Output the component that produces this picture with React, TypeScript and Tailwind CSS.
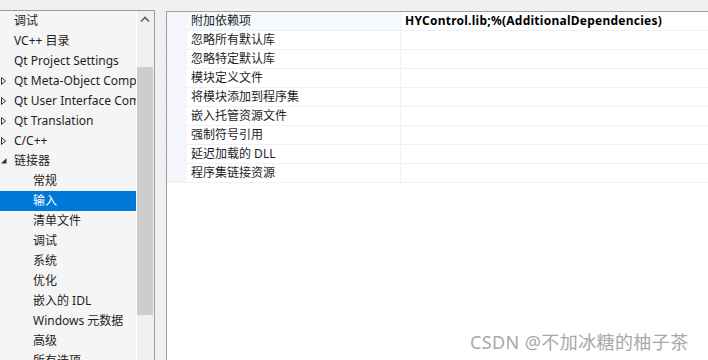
import React from "react";

type TreeItem = { label: string; level: 0 | 1; arrow?: "closed" | "open"; selected?: boolean };

const treeItems: TreeItem[] = [
  { label: "调试", level: 0 },
  { label: "VC++ 目录", level: 0 },
  { label: "Qt Project Settings", level: 0 },
  { label: "Qt Meta-Object Compiler", level: 0, arrow: "closed" },
  { label: "Qt User Interface Compiler", level: 0, arrow: "closed" },
  { label: "Qt Translation", level: 0, arrow: "closed" },
  { label: "C/C++", level: 0, arrow: "closed" },
  { label: "链接器", level: 0, arrow: "open" },
  { label: "常规", level: 1 },
  { label: "输入", level: 1, selected: true },
  { label: "清单文件", level: 1 },
  { label: "调试", level: 1 },
  { label: "系统", level: 1 },
  { label: "优化", level: 1 },
  { label: "嵌入的 IDL", level: 1 },
  { label: "Windows 元数据", level: 1 },
  { label: "高级", level: 1 },
  { label: "所有选项", level: 1 },
];

const props = [
  { name: "附加依赖项", value: "HYControl.lib;%(AdditionalDependencies)" },
  { name: "忽略所有默认库", value: "" },
  { name: "忽略特定默认库", value: "" },
  { name: "模块定义文件", value: "" },
  { name: "将模块添加到程序集", value: "" },
  { name: "嵌入托管资源文件", value: "" },
  { name: "强制符号引用", value: "" },
  { name: "延迟加载的 DLL", value: "" },
  { name: "程序集链接资源", value: "" },
];

const font = "font-['Segoe_UI','Noto_Sans','Noto_Sans_CJK_SC',sans-serif]";

const Arrow = ({ kind }: { kind: "closed" | "open" }) =>
  kind === "closed" ? (
    <svg width="6" height="8" viewBox="0 0 6 8" className="absolute left-[1px] top-[6px]">
      <path d="M0.5 0.5 L4.5 4 L0.5 7.5 Z" fill="none" stroke="#333" strokeWidth="1" />
    </svg>
  ) : (
    <svg width="6" height="6" viewBox="0 0 6 6" className="absolute left-[1px] top-[7px]">
      <path d="M5.5 0 L5.5 5.5 L0 5.5 Z" fill="#333" />
    </svg>
  );

export default function App() {
  return (
    <div className={`relative w-[708px] h-[360px] overflow-hidden bg-[#f0f0f0] flex pt-[10px] gap-[11px] ${font} text-[12px] text-[#1e1e1e]`}>
      {/* tree panel */}
      <div className="w-[155px] h-[360px] shrink-0 flex border-t border-r border-[#9c9c9c] bg-[#f5f5f5]">
        <div className="w-[136px] shrink-0 overflow-hidden">
          {treeItems.map((item, i) => (
            <div
              key={i}
              className={`relative h-[20px] flex items-center whitespace-nowrap ${item.level === 1 ? "pl-[33px]" : "pl-[14px]"} ${item.selected ? "bg-[#0078d7] text-white" : ""}`}
            >
              {item.arrow && <Arrow kind={item.arrow} />}
              {item.label}
            </div>
          ))}
        </div>
        <div className="w-[1px] bg-white" />
        <div className="w-[16px] bg-[#f0f0f0] flex flex-col items-center">
          <svg width="10" height="7" viewBox="0 0 10 7" className="mt-[5px]">
            <path d="M1 5.5 L5 1.5 L9 5.5" fill="none" stroke="#606060" strokeWidth="1.6" />
          </svg>
          <div className="mt-[44px] w-[16px] h-[248px] bg-[#cdcdcd]" />
        </div>
        <div className="w-[1px] bg-[#f0f0f0]" />
      </div>

      {/* property grid */}
      <div className="flex-1 mt-[1px] border-t border-l border-[#a0a0a0] bg-white">
        {props.map((p, i) => (
          <div key={i} className="flex h-[19px] border-b border-[#eef2f8]">
            <div className="w-[20px] bg-[#f3f7fc]" />
            <div className={`w-[214px] pl-[4px] flex items-center border-r border-[#eef2f8] whitespace-nowrap ${i === 0 ? "bg-[#f5f9fd]" : ""}`}>
              {p.name}
            </div>
            <div className="flex-1 pl-[4px] flex items-center font-bold text-black whitespace-nowrap tracking-[0.25px]">{p.value}</div>
          </div>
        ))}
      </div>

      <div className="absolute left-[470px] top-[329px] text-[18px] tracking-[0.4px] text-[#a8a8a8] font-['Noto_Sans','Noto_Sans_CJK_SC',sans-serif] whitespace-nowrap">
        CSDN @不加冰糖的柚子茶
      </div>
    </div>
  );
}
